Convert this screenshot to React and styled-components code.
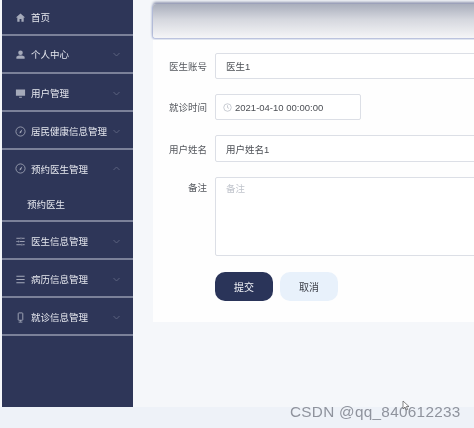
import styled, { createGlobalStyle } from 'styled-components';

const GlobalStyle = createGlobalStyle`
  html, body {
    margin: 0;
    padding: 0;
    height: 100%;
    overflow: hidden;
    background: #f5f7fa;
  }
  * { box-sizing: border-box; }
`;

const Page = styled.div`
  position: relative;
  display: flex;
  width: 474px;
  height: 428px;
  overflow: hidden;
  background: #f5f7fa;
  font-family: "Liberation Sans", "Noto Sans CJK SC", sans-serif;
  filter: blur(0.35px);
`;

const Sidebar = styled.nav`
  flex: none;
  width: 131px;
  height: 407px;
  margin-left: 2px;
  background: #2e3658;
`;

const MenuRow = styled.div`
  display: flex;
  align-items: center;
  height: ${p => p.$h || 38}px;
  padding: ${p => p.$pt ?? 2}px 12px 0 13px;
  border-bottom: ${p => (p.$flat ? 'none' : '2px solid #7b8199')};
  color: #e6e8ef;
  font-size: 9.5px;
`;

const MenuIcon = styled.svg`
  flex: none;
  width: 11px;
  height: 11px;
  margin-right: 5px;
  color: #a5aaba;
`;

const MenuLabel = styled.span`
  flex: 1;
  white-space: nowrap;
`;

const Chevron = styled.svg`
  flex: none;
  width: 9px;
  height: 9px;
  color: #5f6782;
  transform: ${p => (p.$open ? 'rotate(180deg)' : 'none')};
`;

const SubRow = styled.div`
  display: flex;
  align-items: center;
  height: 35px;
  padding-left: 25px;
  border-bottom: 2px solid #7b8199;
  color: #e6e8ef;
  font-size: 9.5px;
`;

const Main = styled.main`
  flex: none;
  width: 341px;
  padding: 4px 0 0 20px;
`;

const TopBar = styled.header`
  width: 340px;
  height: 34px;
  border-radius: 3px 0 0 3px;
  background: linear-gradient(#a9aebc 0%, #d5d7de 45%, #f5f5f7 100%);
  box-shadow: -1px 1px 2px #a8b2d6, 0 -2px 3px #8d94ae;
`;

const Card = styled.section`
  width: 340px;
  height: 282px;
  margin-top: 2px;
  padding: 13px 0 0 62px;
  background: #fefefe;
`;

const FormRow = styled.div`
  display: flex;
  align-items: ${p => (p.$top ? 'flex-start' : 'center')};
  margin-bottom: ${p => p.$gap || 15}px;
`;

const Label = styled.label`
  flex: none;
  width: 54px;
  margin-left: -54px;
  padding-right: 8px;
  padding-top: ${p => (p.$top ? '3px' : '0')};
  text-align: right;
  color: #55585e;
  font-size: 9.5px;
  white-space: nowrap;
`;

const Field = styled.div`
  flex: none;
  display: flex;
  align-items: ${p => (p.$area ? 'flex-start' : 'center')};
  width: ${p => p.$w || 300}px;
  height: ${p => p.$h || 26}px;
  padding: ${p => (p.$area ? '3px 10px' : '0 10px')};
  border: 1px solid #dcdfe6;
  border-radius: 2px;
  background: #fff;
  color: ${p => (p.$muted ? '#c0c4cc' : '#4c4f55')};
  font-size: 9.5px;
  white-space: nowrap;
`;

const ClockIcon = styled.svg`
  flex: none;
  width: 9px;
  height: 9px;
  margin: 0 3px 0 -3px;
  color: #b8bcc5;
`;

const Actions = styled.div`
  display: flex;
  gap: 7px;
  margin-top: 16px;
`;

const Button = styled.button`
  width: 58px;
  height: 29px;
  padding: 0;
  border: none;
  border-radius: 10px;
  background: ${p => (p.$primary ? '#2a3459' : '#e8f1fb')};
  color: ${p => (p.$primary ? '#f2f3f7' : '#3c3f48')};
  font: inherit;
  font-size: 10px;
`;

const FootBand = styled.div`
  position: absolute;
  left: 0;
  right: 0;
  bottom: 0;
  height: 21px;
  background: #eef2f8;
`;

const Watermark = styled.div`
  position: absolute;
  left: 290px;
  top: 403px;
  color: #8f939d;
  font-size: 15.3px;
  letter-spacing: 0.3px;
  white-space: nowrap;
`;

const Cursor = styled.svg`
  position: absolute;
  left: 402px;
  top: 400px;
  width: 8px;
  height: 11px;
`;

const icons = {
  home: <path fill="currentColor" d="M12 3 2 12h3v9h5v-6h4v6h5v-9h3z" />,
  user: <path fill="currentColor" d="M12 3a5 5 0 1 1 0 10 5 5 0 0 1 0-10zM3 17c2-2 5-3 9-3s7 1 9 3v4H3z" />,
  screen: <path fill="currentColor" d="M2 3h20v14H2zM9 19h6v2H9z" />,
  gauge: (
    <>
      <circle cx="12" cy="12" r="10" fill="none" stroke="currentColor" strokeWidth="1.8" />
      <path fill="currentColor" d="M16 7 13.5 14 10 16.5 10.5 12.5z" />
    </>
  ),
  sliders: (
    <path
      fill="none"
      stroke="currentColor"
      strokeWidth="2"
      d="M3 5h8M15 5h6M13 3v4M3 12h3M10 12h11M8 10v4M3 19h10M17 19h4M15 17v4"
    />
  ),
  lines: <path fill="none" stroke="currentColor" strokeWidth="2.2" d="M3 5h18M3 12h18M3 19h18" />,
  phone: (
    <>
      <rect x="7" y="2" width="10" height="16" rx="1.5" fill="none" stroke="currentColor" strokeWidth="2" />
      <path fill="none" stroke="currentColor" strokeWidth="2" d="M12 18v3M8 22h8" />
    </>
  ),
};

function Item({ icon, label, arrow, open, flat, h, pt }) {
  return (
    <MenuRow $flat={flat} $h={h} $pt={pt}>
      <MenuIcon viewBox="0 0 24 24">{icons[icon]}</MenuIcon>
      <MenuLabel>{label}</MenuLabel>
      {arrow && (
        <Chevron viewBox="0 0 12 12" $open={open}>
          <path d="M2 4l4 4 4-4" fill="none" stroke="currentColor" strokeWidth="1.2" />
        </Chevron>
      )}
    </MenuRow>
  );
}

export default function App() {
  return (
    <>
      <GlobalStyle />
      <Page>
        <FootBand />
        <Sidebar>
          <Item icon="home" label="首页" h={36} pt={0} />
          <Item icon="user" label="个人中心" arrow pt={0} />
          <Item icon="screen" label="用户管理" arrow />
          <Item icon="gauge" label="居民健康信息管理" arrow />
          <Item icon="gauge" label="预约医生管理" arrow open flat h={37} pt={0} />
          <SubRow>预约医生</SubRow>
          <Item icon="sliders" label="医生信息管理" arrow />
          <Item icon="lines" label="病历信息管理" arrow />
          <Item icon="phone" label="就诊信息管理" arrow />
        </Sidebar>
        <Main>
          <TopBar />
          <Card>
            <FormRow>
              <Label>医生账号</Label>
              <Field>医生1</Field>
            </FormRow>
            <FormRow>
              <Label>就诊时间</Label>
              <Field $w={146}>
                <ClockIcon viewBox="0 0 12 12">
                  <circle cx="6" cy="6" r="5" fill="none" stroke="currentColor" />
                  <path d="M6 3v3.2l2 1" fill="none" stroke="currentColor" />
                </ClockIcon>
                2021-04-10 00:00:00
              </Field>
            </FormRow>
            <FormRow>
              <Label>用户姓名</Label>
              <Field $h={27}>用户姓名1</Field>
            </FormRow>
            <FormRow $top $gap={1}>
              <Label $top>备注</Label>
              <Field $area $muted $h={79}>备注</Field>
            </FormRow>
            <Actions>
              <Button $primary>提交</Button>
              <Button>取消</Button>
            </Actions>
          </Card>
        </Main>
        <Watermark>CSDN @qq_840612233</Watermark>
        <Cursor viewBox="0 0 8 11">
          <path d="M1 1v8l2-2 1.5 3 1.2-.6L4.4 6.5H7z" fill="#fff" stroke="#555" strokeWidth="0.7" />
        </Cursor>
      </Page>
    </>
  );
}
